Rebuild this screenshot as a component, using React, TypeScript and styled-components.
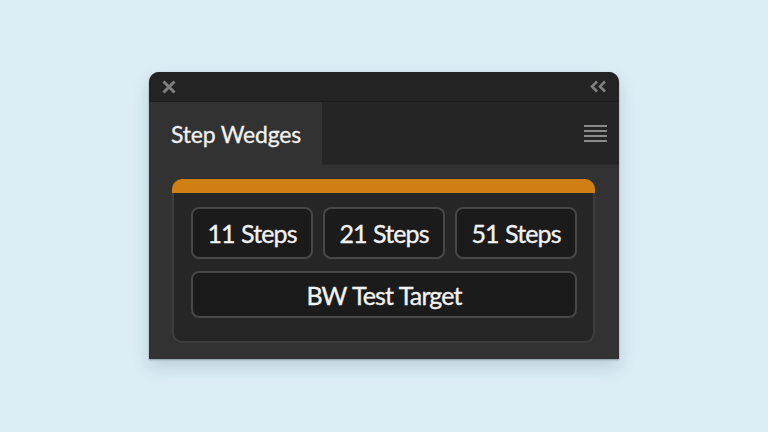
import React from "react";
import styled, { createGlobalStyle } from "styled-components";

const GlobalStyle = createGlobalStyle`
  html, body {
    margin: 0;
    padding: 0;
    background: #dcedf5;
  }
  #root {
    width: 100vw;
    height: 100vh;
  }
`;

const Page = styled.div`
  width: 100%;
  height: 100%;
  display: flex;
  align-items: center;
  justify-content: center;
  font-family: "Lato", "Open Sans", sans-serif;
`;

const Panel = styled.div`
  width: 470px;
  height: 287px;
  margin-bottom: 1px;
  display: flex;
  flex-direction: column;
  background: #323232;
  border-radius: 10px 10px 0 0;
  box-shadow: 0 8px 18px rgba(40, 70, 90, 0.18), 0 1px 2px rgba(0, 0, 0, 0.3);
  overflow: hidden;
`;

const TitleBar = styled.div`
  height: 29px;
  flex: none;
  display: flex;
  align-items: center;
  justify-content: space-between;
  padding: 0 12px 0 13px;
  background: #232323;
  border-bottom: 1px solid #1d1d1d;
`;

const IconButton = styled.span`
  display: flex;
  align-items: center;
  color: #7f7f7f;
`;

const Header = styled.div`
  height: 63px;
  flex: none;
  display: flex;
  background: #252525;
`;

const Tab = styled.div<{ $active?: boolean }>`
  width: 173px;
  display: flex;
  align-items: center;
  padding-left: 22px;
  box-sizing: border-box;
  background: ${(p) => (p.$active ? "#323232" : "transparent")};
  color: #f0f0f0;
  font-size: 23px;
  letter-spacing: -0.2px;
  -webkit-text-stroke: 0.3px #f0f0f0;
`;

const HeaderSpacer = styled.div`
  flex: 1;
  display: flex;
  align-items: center;
  justify-content: flex-end;
  padding-right: 12px;
  border-bottom: 1px solid #2b2b2b;
`;

const Body = styled.div`
  flex: 1;
  padding: 14px 24px 16px 23px;
  display: flex;
  flex-direction: column;
`;

const AccentBar = styled.div`
  height: 14px;
  flex: none;
  background: #d07f15;
  border-radius: 10px 10px 0 0;
`;

const Card = styled.div`
  flex: 1;
  display: grid;
  grid-template-columns: repeat(3, 1fr);
  grid-template-rows: 52px 47px;
  column-gap: 10px;
  row-gap: 12px;
  padding: 14px 16px 0 17px;
  background: #262626;
  border: 2px solid #3e3e3e;
  border-top: none;
  border-radius: 0 0 10px 10px;
`;

const StepButton = styled.button<{ $wide?: boolean }>`
  grid-column: ${(p) => (p.$wide ? "1 / span 3" : "auto")};
  background: #1b1b1b;
  border: 2px solid #484848;
  border-radius: 8px;
  color: #f2f2f2;
  font-family: inherit;
  font-size: 25px;
  letter-spacing: -0.9px;
  word-spacing: 1px;
  -webkit-text-stroke: 0.35px #f2f2f2;
  padding: 0;
  cursor: pointer;
`;

const CloseIcon = () => (
  <svg width="14" height="14" viewBox="0 0 14 14">
    <path d="M1.5 1.5 L12.5 12.5 M12.5 1.5 L1.5 12.5" stroke="currentColor" strokeWidth="3" strokeLinecap="butt" />
  </svg>
);

const CollapseIcon = () => (
  <svg width="17" height="13" viewBox="0 0 17 13">
    <path d="M7 1.5 L2 6.5 L7 11.5 M15 1.5 L10 6.5 L15 11.5" stroke="currentColor" strokeWidth="2.6" fill="none" />
  </svg>
);

const MenuIcon = () => (
  <svg width="23" height="17" viewBox="0 0 23 17">
    {[1, 6, 11, 16].map((y) => (
      <rect key={y} x="0" y={y - 1} width="23" height="2" fill="#8a8a8a" />
    ))}
  </svg>
);

export default function App() {
  return (
    <Page>
      <GlobalStyle />
      <Panel>
        <TitleBar>
          <IconButton>
            <CloseIcon />
          </IconButton>
          <IconButton>
            <CollapseIcon />
          </IconButton>
        </TitleBar>
        <Header>
          <Tab $active>Step Wedges</Tab>
          <HeaderSpacer>
            <MenuIcon />
          </HeaderSpacer>
        </Header>
        <Body>
          <AccentBar />
          <Card>
            <StepButton>11 Steps</StepButton>
            <StepButton>21 Steps</StepButton>
            <StepButton>51 Steps</StepButton>
            <StepButton $wide>BW Test Target</StepButton>
          </Card>
        </Body>
      </Panel>
    </Page>
  );
}
